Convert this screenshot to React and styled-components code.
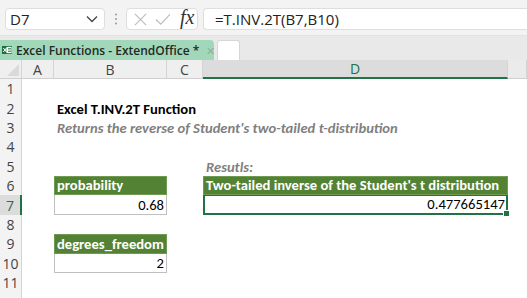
import React from "react";
import styled, { createGlobalStyle } from "styled-components";

const GlobalStyle = createGlobalStyle`
  html, body {
    margin: 0;
    padding: 0;
    width: 527px;
    height: 298px;
    overflow: hidden;
    background: #ffffff;
  }
  body {
    font-family: "Carlito", "Lato", "Liberation Sans", sans-serif;
  }
`;

const Screen = styled.div`
  width: 527px;
  height: 298px;
  display: flex;
  flex-direction: column;
  overflow: hidden;
`;

const FormulaBar = styled.div`
  flex-shrink: 0;
  height: 36px;
  box-sizing: border-box;
  background: #f3f3f3;
  display: flex;
  align-items: flex-start;
  padding: 8px 0 0 5px;
  border-bottom: 1px solid #e2e2e2;
`;

const NameBox = styled.div`
  width: 100px;
  height: 22px;
  box-sizing: border-box;
  background: #fff;
  border: 1px solid #dedede;
  border-radius: 4px;
  display: flex;
  align-items: center;
  justify-content: space-between;
  padding: 0 6px 0 4px;
  font-family: "Open Sans", "Liberation Sans", sans-serif;
  font-size: 15px;
  color: #222;
  svg {
    flex-shrink: 0;
  }
`;

const Dots = styled.div`
  width: 21px;
  display: flex;
  justify-content: center;
  padding-top: 5px;
`;

const FxBox = styled(NameBox)`
  width: 72px;
  padding: 0 3px 0 6px;
  gap: 7px;
  justify-content: flex-start;
`;

const FxLabel = styled.span`
  font-family: "Liberation Serif", serif;
  font-style: italic;
  font-size: 20px;
  color: #333;
  margin-left: 2px;
  margin-top: -3px;
`;

const FormulaBox = styled(NameBox)`
  flex: 1;
  margin-left: 5px;
  border-right: none;
  border-radius: 4px 0 0 4px;
  padding-left: 11px;
  justify-content: flex-start;
  font-size: 15px;
`;

const TabStrip = styled.div`
  flex-shrink: 0;
  height: 24px;
  box-sizing: border-box;
  background: #e9e9e9;
  display: flex;
  align-items: flex-end;
  gap: 3px;
`;

const Tab = styled.div`
  width: 214px;
  height: 20px;
  box-sizing: border-box;
  background: #a2d8ba;
  border-radius: 0 4px 0 0;
  display: flex;
  align-items: center;
  gap: 4px;
  padding-left: 2px;
  font-family: "Open Sans", "Liberation Sans", sans-serif;
  font-weight: 600;
  font-size: 12px;
  color: #1f2a24;
  white-space: nowrap;
  svg {
    flex-shrink: 0;
  }
`;

const TabClose = styled.span`
  color: #8fae9c;
  font-weight: 400;
  font-size: 11px;
  margin-left: 3px;
`;

const NewTab = styled.div`
  width: 21px;
  height: 19px;
  background: #fff;
  border: 1px solid #d6d6d6;
  border-bottom: none;
  border-radius: 3px 3px 0 0;
`;

const Sheet = styled.div`
  flex: 1;
  min-height: 0;
  overflow: hidden;
  display: grid;
  grid-template-columns: 22px 32px 113px 36px 305px 1fr;
  grid-template-rows: 19px repeat(12, 19.4px);
  background: #fff;
`;

const Corner = styled.div`
  background: #efefef;
  border-right: 1px solid #d4d4d4;
  border-bottom: 1px solid #cfcfcf;
  position: relative;
  &::after {
    content: "";
    position: absolute;
    right: 2px;
    bottom: 2px;
    border-left: 12px solid transparent;
    border-bottom: 12px solid #dadada;
  }
`;

const ColHead = styled.div`
  box-sizing: border-box;
  background: ${(p) => (p.$active ? "#dcdcdc" : p.$blank ? "#ebebeb" : "#efefef")};
  border-right: 1px solid #d4d4d4;
  border-bottom: ${(p) => (p.$active ? "2px solid #217346" : "1px solid #cfcfcf")};
  color: ${(p) => (p.$active ? "#217346" : "#444")};
  font-family: "Open Sans", "Liberation Sans", sans-serif;
  font-size: 14px;
  display: flex;
  align-items: center;
  justify-content: center;
`;

const RowHead = styled.div`
  box-sizing: border-box;
  background: ${(p) => (p.$active ? "#dcdcdc" : "#f3f3f3")};
  border-right: ${(p) => (p.$active ? "2px solid #217346" : "1px solid #d4d4d4")};
  color: ${(p) => (p.$active ? "#217346" : "#444")};
  font-family: "Open Sans", "Liberation Sans", sans-serif;
  font-size: 14px;
  display: flex;
  align-items: center;
  justify-content: center;
`;

const Cell = styled.div`
  box-sizing: border-box;
  position: relative;
  display: flex;
  align-items: flex-end;
  justify-content: ${(p) => (p.$right ? "flex-end" : "flex-start")};
  padding: 0 2px 0 3px;
  font-size: 14.6px;
  line-height: 18px;
  white-space: nowrap;
  overflow: visible;
  color: #000;
  ${(p) => p.$bold && "font-weight: 700;"}
  ${(p) => p.$note && "font-weight: 700; font-style: italic; color: #7f7f7f;"}
  ${(p) =>
    p.$head &&
    "background: #548235; color: #fff; font-weight: 700; border: 1px solid #6e9a52; padding-left: 2px;"}
  ${(p) => p.$value && "border: 1px solid #bfbfbf; border-top: none;"}
  ${(p) => p.$selected && "border: 2px solid #217346; border-top-width: 1px; padding-right: 1px;"}
`;

const Handle = styled.span`
  position: absolute;
  right: -4px;
  bottom: -4px;
  width: 5px;
  height: 5px;
  background: #217346;
  border: 1px solid #fff;
`;

function Chevron() {
  return (
    <svg width="12" height="8" viewBox="0 0 12 8">
      <path d="M1 1.5 L6 6.5 L11 1.5" fill="none" stroke="#444" strokeWidth="1.3" />
    </svg>
  );
}

function VDots() {
  return (
    <svg width="4" height="12" viewBox="0 0 4 12">
      <circle cx="2" cy="1.5" r="1" fill="#9a9a9a" />
      <circle cx="2" cy="6" r="1" fill="#9a9a9a" />
      <circle cx="2" cy="10.5" r="1" fill="#9a9a9a" />
    </svg>
  );
}

function Cross() {
  return (
    <svg width="15" height="15" viewBox="0 0 16 16">
      <path d="M2 2 L14 14 M14 2 L2 14" stroke="#bdbdbd" strokeWidth="1.3" />
    </svg>
  );
}

function Check() {
  return (
    <svg width="16" height="13" viewBox="0 0 17 14">
      <path d="M1 7 L6 12 L16 1.5" fill="none" stroke="#bdbdbd" strokeWidth="1.3" />
    </svg>
  );
}

function SheetIcon() {
  return (
    <svg width="10" height="10" viewBox="0 0 10 10">
      <rect x="0" y="1" width="6" height="8" fill="#1d6f42" />
      <rect x="4" y="1.5" width="6" height="7" fill="#fff" stroke="#1d6f42" strokeWidth="0.8" />
      <path d="M1.3 3 L4.5 7 M4.5 3 L1.3 7" stroke="#fff" strokeWidth="1" />
      <path d="M6 3.5 H9 M6 5 H9 M6 6.5 H9" stroke="#1d6f42" strokeWidth="0.7" />
    </svg>
  );
}

const cols = ["A", "B", "C", "D"];

export default function App() {
  const cells = {
    "2-B": <Cell $bold>Excel T.INV.2T Function</Cell>,
    "3-B": <Cell $note>Returns the reverse of Student's two-tailed t-distribution</Cell>,
    "5-D": <Cell $note>Resutls:</Cell>,
    "6-B": <Cell $head>probability</Cell>,
    "6-D": <Cell $head>Two-tailed inverse of the Student's t distribution</Cell>,
    "7-B": <Cell $value $right>0.68</Cell>,
    "7-D": (
      <Cell $selected $right>
        0.477665147
        <Handle />
      </Cell>
    ),
    "9-B": <Cell $head>degrees_freedom</Cell>,
    "10-B": <Cell $value $right>2</Cell>,
  };

  const rows = [];
  for (let r = 1; r <= 12; r++) {
    // row 12 only peeks in at the bottom edge, its number falls below the window
    rows.push(
      <RowHead key={`h${r}`} $active={r === 7}>
        {r < 12 ? r : ""}
      </RowHead>
    );
    for (const c of [...cols, "E"]) {
      rows.push(<React.Fragment key={`${r}-${c}`}>{cells[`${r}-${c}`] || <Cell />}</React.Fragment>);
    }
  }

  return (
    <Screen>
      <GlobalStyle />
      <FormulaBar>
        <NameBox>
          D7
          <Chevron />
        </NameBox>
        <Dots>
          <VDots />
        </Dots>
        <FxBox>
          <Cross />
          <Check />
          <FxLabel>fx</FxLabel>
        </FxBox>
        <FormulaBox>=T.INV.2T(B7,B10)</FormulaBox>
      </FormulaBar>
      <TabStrip>
        <Tab>
          <SheetIcon />
          Excel Functions - ExtendOffice *
          <TabClose>✕</TabClose>
        </Tab>
        <NewTab />
      </TabStrip>
      <Sheet>
        <Corner />
        {cols.map((c) => (
          <ColHead key={c} $active={c === "D"}>
            {c}
          </ColHead>
        ))}
        <ColHead $blank />
        {rows}
      </Sheet>
    </Screen>
  );
}
